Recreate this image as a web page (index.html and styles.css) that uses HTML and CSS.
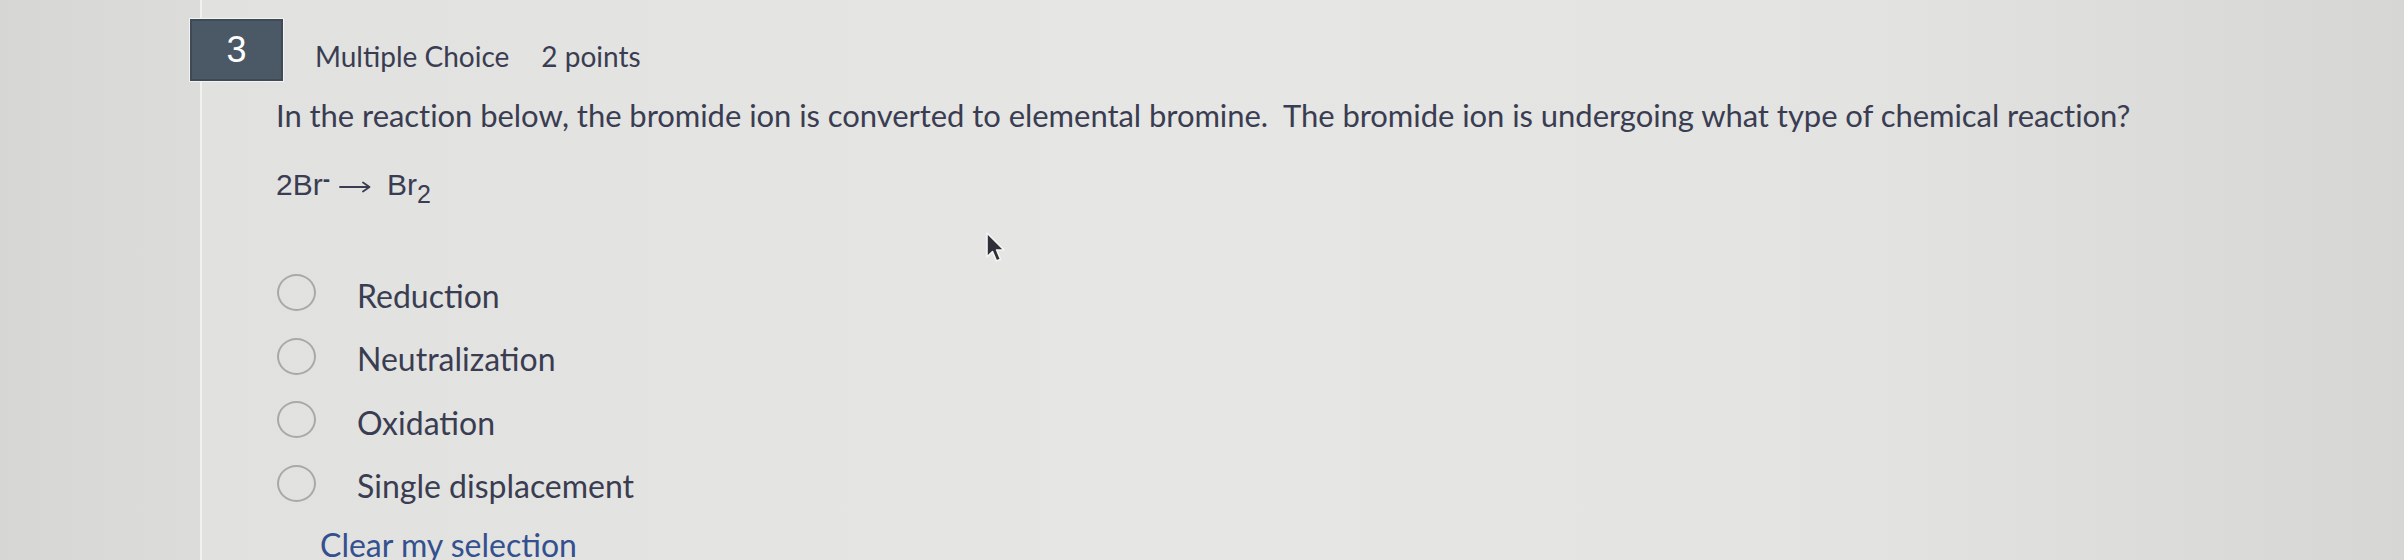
FILE: index.html
```html
<!DOCTYPE html>
<html lang="en">
<head>
<meta charset="utf-8">
<title>Question 3</title>
<link rel="stylesheet" href="styles.css">
</head>
<body>
<div class="page">
  <div class="gutter"></div>
  <main class="content">
    <div class="header">
      <div class="qnum">3</div>
      <span class="qtype">Multiple Choice</span>
      <span class="qpoints">2 points</span>
    </div>
    <p class="prompt">In the reaction below, the bromide ion is converted to elemental bromine.&nbsp; The bromide ion is undergoing what type of chemical reaction?</p>
    <p class="formula">2Br<sup class="minus">-</sup><svg class="arrow" width="32" height="14" viewBox="0 0 32 14"><path d="M1 7 H30 M24 2.5 L30.5 7 L24 11.5" fill="none" stroke="#3a3d52" stroke-width="1.8" stroke-linecap="round" stroke-linejoin="round"/></svg>Br<sub class="sub">2</sub></p>
    <ul class="options">
      <li class="option"><span class="radio"></span><span class="label">Reduction</span></li>
      <li class="option"><span class="radio"></span><span class="label">Neutralization</span></li>
      <li class="option"><span class="radio"></span><span class="label">Oxidation</span></li>
      <li class="option"><span class="radio"></span><span class="label">Single displacement</span></li>
    </ul>
    <a class="clear" href="#">Clear my selection</a>
  </main>
  <svg class="cursor" width="22" height="32" viewBox="0 0 22 32">
    <path d="M2 1 L2 25 L7.5 19.5 L11.5 29 L15.5 27.3 L11.6 18 L19 18 Z" fill="#2e2f38" stroke="#f4f4f2" stroke-width="1.6" stroke-linejoin="round"/>
  </svg>
</div>
</body>
</html>
```
FILE: styles.css
```css
* { box-sizing: border-box; }
html, body {
  margin: 0;
  padding: 0;
  height: 560px;
  overflow: hidden;
}
body {
  font-family: Lato, "Open Sans", sans-serif;
  color: #3a3d52;
  background: #dadad8;
}
.page {
  position: relative;
  display: flex;
  height: 560px;
}
.gutter {
  width: 200px;
  flex: none;
  background: linear-gradient(90deg, #d6d6d4 0%, #dcdcda 100%);
}
.content {
  flex: 1;
  border-left: 2px solid #f1f1ef;
  background: linear-gradient(90deg, #e1e1df 0%, #e6e6e4 45%, #e3e3e1 75%, #d6d6d4 100%);
  padding-top: 18px;
}
.header {
  display: flex;
  align-items: center;
  margin-left: -13px;
  height: 64px;
}
.qnum {
  width: 95px;
  height: 64px;
  flex: none;
  display: flex;
  align-items: center;
  justify-content: center;
  background: #4b5866;
  border: 1px solid #f2f2f0;
  color: #ffffff;
  font-family: "Liberation Sans", Arial, sans-serif;
  font-size: 36px;
  box-shadow: inset 0 0 0 2px #3f4a56;
}
.qtype {
  margin-left: 31px;
  font-size: 28px;
  padding-top: 12px;
}
.qpoints {
  margin-left: 32px;
  font-size: 28px;
  padding-top: 12px;
}
.prompt {
  margin: 14px 0 0 74px;
  font-size: 31px;
  line-height: 38px;
  letter-spacing: -0.05px;
}
.formula {
  margin: 33px 0 0 74px;
  font-family: "Liberation Sans", Arial, sans-serif;
  font-size: 30px;
  line-height: 36px;
}
.minus {
  font-size: 22px;
  font-weight: 700;
  vertical-align: 9px;
  line-height: 0;
}
.arrow {
  margin: 0 16px 0 9px;
  vertical-align: 1px;
}
.sub {
  font-size: 25px;
  vertical-align: -8px;
  line-height: 0;
}
.options {
  list-style: none;
  margin: 61px 0 0 75px;
  padding: 0;
}
.option {
  display: flex;
  align-items: center;
  height: 63.5px;
}
.radio {
  width: 39px;
  height: 37px;
  flex: none;
  border: 2.5px solid #a9a9a7;
  border-radius: 50%;
  margin-right: 41px;
  margin-top: -6px;
}
.label {
  font-size: 32px;
  line-height: 38px;
}
.clear {
  display: block;
  margin: 8px 0 0 118px;
  font-size: 32px;
  line-height: 38px;
  color: #34508f;
  text-decoration: none;
}
.cursor {
  position: absolute;
  left: 985px;
  top: 232px;
}
```
